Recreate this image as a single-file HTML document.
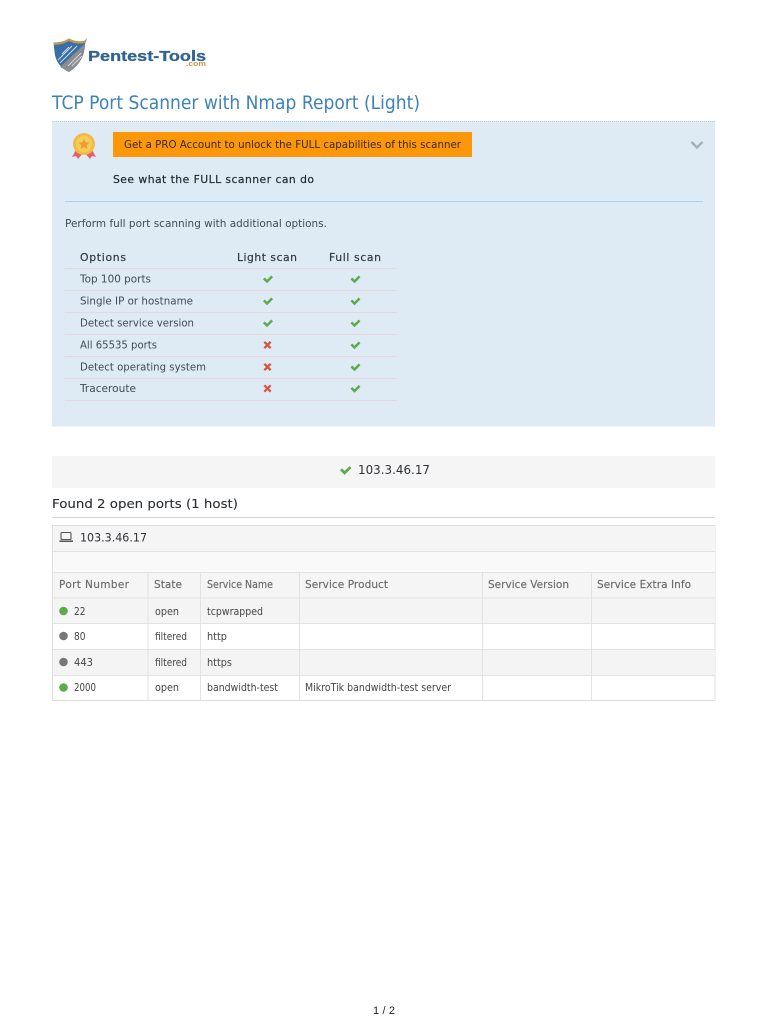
<!DOCTYPE html>
<html><head><meta charset="utf-8"><style>
html,body{margin:0;padding:0;background:#fff;width:768px;height:1024px;overflow:hidden}
svg{display:block}
text{font-family:"DejaVu Sans",sans-serif;fill:#3a3f44;font-size:10.5px}
.h{font-size:10.5px;fill:#6a6a6a;stroke:#6a6a6a;stroke-width:.15}
.o{font-size:10.8px;fill:#414a54}
.c{font-size:10.5px;fill:#454545}
.t{font-size:10.8px;fill:#2f363d;stroke:#2f363d;stroke-width:.18}
</style></head><body>
<svg width="768" height="1024" viewBox="0 0 768 1024" xmlns="http://www.w3.org/2000/svg">
<defs>
<path id="ck" d="M0 4.200L1.700 2.500L4 4.800L8.300 .5L10 2.200L4 8.200Z" fill="#5cab4b"/>
<path id="x" d="M1.600 0L4 2.400L6.400 0L8 1.600L5.600 4L8 6.400L6.400 8L4 5.600L1.600 8L0 6.400L2.400 4L0 1.600Z" fill="#d9573f"/>
</defs>
<!-- logo -->
<path d="M53.500 42.500Q62 43 69 38.500Q76 42.500 84 41L87 38.500L85 44Q84.500 62 69 72Q56 66 54.500 52Z" fill="#3a6ea5"/>
<path d="M53.500 42.500Q62 43 69 38.500Q76 42.500 84 41L87 38.500L85 43Q76 45 69 41Q62 45 54 45Z" fill="#c2974f"/>
<path d="M84.500 44Q84 62 69 72L60 67Z" fill="#8b8d8f"/>
<path d="M58 60L72 46M60 63L77 46M62 54L69 47" stroke="#c9dbe9" stroke-width="1" fill="none"/>
<path d="M68 66L81 53M72 66L82 56" stroke="#d5d5d5" stroke-width="1" fill="none"/>
<text x="88" y="61" textLength="118" lengthAdjust="spacingAndGlyphs" style="font-family:'Liberation Sans',sans-serif;font-size:14.500px;font-weight:bold;fill:#2f6390;stroke:#2f6390;stroke-width:.3">Pentest-Tools</text>
<text x="186" y="66" textLength="20" lengthAdjust="spacingAndGlyphs" style="font-family:'Liberation Sans',sans-serif;font-size:7px;font-weight:bold;fill:#c8964a">.com</text>
<!-- title -->
<text x="52" y="109" textLength="368" lengthAdjust="spacingAndGlyphs" style="font-size:19px;fill:#3c82b8">TCP Port Scanner with Nmap Report (Light)</text>
<!-- panel -->
<rect x="52" y="121" width="663" height="305.500" fill="#deebf5"/>
<line x1="52" y1="121.500" x2="715" y2="121.500" stroke="#b3cde0" stroke-width="1" stroke-dasharray="1 1"/>
<!-- medal -->
<path d="M77 148L72 157L76 156L78 159L84 152L90 159L92 156L96 157L91 148Z" fill="#e4606d"/>
<circle cx="84" cy="144" r="11" fill="#f1bb4a"/>
<circle cx="84" cy="144" r="8" fill="#f7cd56"/>
<path d="M84 138.500L85.700 142.200L89.500 142.600L86.700 145.200L87.500 149L84 147L80.500 149L81.300 145.200L78.500 142.600L82.300 142.200Z" fill="#ef9b2d"/>
<!-- cta -->
<rect x="113" y="132" width="359" height="25" fill="#fb9708"/>
<text x="124" y="148" textLength="337" lengthAdjust="spacingAndGlyphs" style="font-size:10.800px;fill:#3a2a10">Get a PRO Account to unlock the FULL capabilities of this scanner</text>
<path d="M691.500 142L697 147.500L702.500 142" fill="none" stroke="#a4b1bc" stroke-width="2.400"/>
<text class="t" x="113" y="183" textLength="201" lengthAdjust="spacing" style="fill:#23282d;stroke:#23282d">See what the FULL scanner can do</text>
<rect x="65" y="201" width="638" height="1" fill="#a6d3f5"/>
<text class="o" x="65" y="227" textLength="262" lengthAdjust="spacingAndGlyphs">Perform full port scanning with additional options.</text>
<!-- options -->
<text class="t" x="80" y="261" textLength="46" lengthAdjust="spacing">Options</text>
<text class="t" x="237" y="261" textLength="60" lengthAdjust="spacing">Light scan</text>
<text class="t" x="329" y="261" textLength="52" lengthAdjust="spacing">Full scan</text>
<g stroke="#ebd6df" stroke-width="1">
<line x1="65" x2="397" y1="268.500" y2="268.500"/><line x1="65" x2="397" y1="290.500" y2="290.500"/>
<line x1="65" x2="397" y1="312.500" y2="312.500"/><line x1="65" x2="397" y1="334.500" y2="334.500"/>
<line x1="65" x2="397" y1="356.500" y2="356.500"/><line x1="65" x2="397" y1="378.500" y2="378.500"/>
<line x1="65" x2="397" y1="400.500" y2="400.500"/>
</g>
<text class="o" x="80" y="282.500" textLength="71" lengthAdjust="spacingAndGlyphs">Top 100 ports</text>
<text class="o" x="80" y="304.500" textLength="113" lengthAdjust="spacingAndGlyphs">Single IP or hostname</text>
<text class="o" x="80" y="326.500" textLength="114" lengthAdjust="spacingAndGlyphs">Detect service version</text>
<text class="o" x="80" y="348.500" textLength="77" lengthAdjust="spacingAndGlyphs">All 65535 ports</text>
<text class="o" x="80" y="370.500" textLength="126" lengthAdjust="spacingAndGlyphs">Detect operating system</text>
<text class="o" x="80" y="392" textLength="56" lengthAdjust="spacingAndGlyphs">Traceroute</text>
<use href="#ck" x="263" y="275"/><use href="#ck" x="263" y="297"/><use href="#ck" x="263" y="319"/>
<use href="#x" x="263.500" y="341"/><use href="#x" x="263.500" y="363"/><use href="#x" x="263.500" y="384.500"/>
<use href="#ck" x="350.500" y="275"/><use href="#ck" x="350.500" y="297"/><use href="#ck" x="350.500" y="319"/>
<use href="#ck" x="350.500" y="341"/><use href="#ck" x="350.500" y="363"/><use href="#ck" x="350.500" y="384.500"/>
<!-- host bar -->
<rect x="52" y="456" width="663" height="32" fill="#f5f5f5"/>
<use href="#ck" transform="translate(340,465.500) scale(1.150)"/>
<text x="358" y="474" textLength="72" lengthAdjust="spacingAndGlyphs" style="font-size:12.300px;fill:#2f3338">103.3.46.17</text>
<text x="52" y="508" textLength="186" lengthAdjust="spacingAndGlyphs" style="font-size:12.800px;fill:#2a2e33;stroke:#2a2e33;stroke-width:.1">Found 2 open ports (1 host)</text>
<line x1="52" x2="715" y1="517.500" y2="517.500" stroke="#d6d6d6"/>
<!-- results table -->
<rect x="52.500" y="525.500" width="662.500" height="175" fill="#fff" stroke="#e0e0e0"/>
<rect x="53" y="526" width="662" height="25" fill="#f5f5f5"/>
<rect x="53" y="552" width="662" height="20" fill="#f9f9f9"/>
<rect x="53" y="573" width="662" height="24.500" fill="#f5f5f5"/>
<rect x="53" y="598" width="662" height="25.500" fill="#f4f4f4"/>
<rect x="53" y="650" width="662" height="25" fill="#f4f4f4"/>
<g stroke="#e2e2e2">
<line x1="53" x2="715" y1="551.500" y2="551.500"/><line x1="53" x2="715" y1="572.500" y2="572.500"/>
<line x1="53" x2="715" y1="598" y2="598"/><line x1="53" x2="715" y1="623.500" y2="623.500"/>
<line x1="53" x2="715" y1="649.500" y2="649.500"/><line x1="53" x2="715" y1="675.500" y2="675.500"/>
<line x1="148" x2="148" y1="572" y2="700"/><line x1="200.500" x2="200.500" y1="572" y2="700"/>
<line x1="299.500" x2="299.500" y1="572" y2="700"/><line x1="482.500" x2="482.500" y1="572" y2="700"/>
<line x1="591.500" x2="591.500" y1="572" y2="700"/>
</g>
<!-- laptop -->
<rect x="61" y="532.500" width="10" height="7" rx=".8" fill="none" stroke="#555" stroke-width="1.100"/>
<rect x="59.500" y="540.500" width="13.500" height="1.500" fill="#555"/>
<text x="80" y="541.500" textLength="67" lengthAdjust="spacingAndGlyphs" style="font-size:11.300px;fill:#2f3338">103.3.46.17</text>
<text class="h" x="59" y="588" textLength="70" lengthAdjust="spacing">Port Number</text>
<text class="h" x="154" y="588" textLength="28" lengthAdjust="spacing">State</text>
<text class="h" x="207" y="588" textLength="66" lengthAdjust="spacingAndGlyphs">Service Name</text>
<text class="h" x="305" y="588" textLength="83" lengthAdjust="spacing">Service Product</text>
<text class="h" x="488" y="588" textLength="81" lengthAdjust="spacing">Service Version</text>
<text class="h" x="597" y="588" textLength="94" lengthAdjust="spacing">Service Extra Info</text>
<circle cx="63.500" cy="611" r="4.300" fill="#5cab4b"/>
<circle cx="63.500" cy="636" r="4.300" fill="#777"/>
<circle cx="63.500" cy="662" r="4.300" fill="#777"/>
<circle cx="63.500" cy="687.500" r="4.300" fill="#5cab4b"/>
<text class="c" x="74" y="615" textLength="11.500" lengthAdjust="spacingAndGlyphs">22</text>
<text class="c" x="74" y="640" textLength="11.500" lengthAdjust="spacingAndGlyphs">80</text>
<text class="c" x="74" y="666" textLength="19" lengthAdjust="spacingAndGlyphs">443</text>
<text class="c" x="74" y="691" textLength="22" lengthAdjust="spacingAndGlyphs">2000</text>
<text class="c" x="155" y="615" textLength="24" lengthAdjust="spacingAndGlyphs">open</text>
<text class="c" x="155" y="640" textLength="32" lengthAdjust="spacingAndGlyphs">filtered</text>
<text class="c" x="155" y="666" textLength="32" lengthAdjust="spacingAndGlyphs">filtered</text>
<text class="c" x="155" y="691" textLength="24" lengthAdjust="spacingAndGlyphs">open</text>
<text class="c" x="207" y="615" textLength="56" lengthAdjust="spacingAndGlyphs">tcpwrapped</text>
<text class="c" x="207" y="640" textLength="20" lengthAdjust="spacingAndGlyphs">http</text>
<text class="c" x="207" y="666" textLength="25" lengthAdjust="spacingAndGlyphs">https</text>
<text class="c" x="207" y="691" textLength="71" lengthAdjust="spacingAndGlyphs">bandwidth-test</text>
<text class="c" x="305" y="691" textLength="146" lengthAdjust="spacingAndGlyphs">MikroTik bandwidth-test server</text>
<!-- footer -->
<text x="373" y="1014" textLength="22" lengthAdjust="spacing" style="font-family:'Liberation Sans',sans-serif;font-size:11px;fill:#222">1 / 2</text>
</svg>
</body></html>
